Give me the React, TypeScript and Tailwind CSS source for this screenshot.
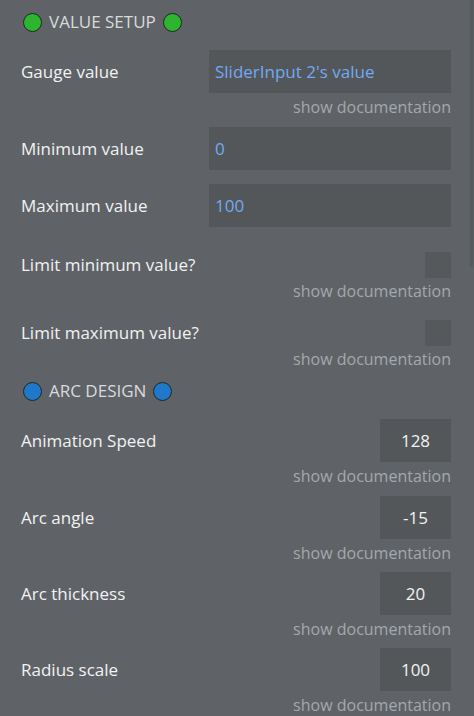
import { FC } from "react";

const DOC = "show documentation";

const SectionHeader: FC<{ title: string; dot: string; className?: string }> = ({ title, dot, className = "" }) => (
  <div className={`flex items-center gap-[7px] h-[28px] pl-[2px] ${className}`}>
    <span className={`h-[19px] w-[19px] rounded-full border-[1.5px] border-[#1c2a22] ${dot}`} />
    <span className="text-[17px] text-[#d9dadb]">{title}</span>
    <span className={`h-[19px] w-[19px] rounded-full border-[1.5px] border-[#1c2a22] ${dot}`} />
  </div>
);

const Doc: FC = () => (
  <div className="mt-[4px] h-[20px] leading-[20px] text-right text-[16px] text-[#a5a8ab]">{DOC}</div>
);

const TextRow: FC<{ label: string; value: string; doc?: boolean; className?: string }> = ({ label, value, doc, className = "" }) => (
  <div className={className}>
    <div className="flex items-center h-[43px]">
      <div className="flex-1 text-[17px] text-[#f2f2f2]">{label}</div>
      <div className="w-[242px] h-[43px] bg-[#53575a] flex items-center px-[6px] text-[17px] text-[#72a9f2]">{value}</div>
    </div>
    {doc && <Doc />}
  </div>
);

const NumberRow: FC<{ label: string; value: string; className?: string }> = ({ label, value, className = "" }) => (
  <div className={className}>
    <div className="flex items-center h-[43px]">
      <div className="flex-1 text-[17px] text-[#f2f2f2]">{label}</div>
      <div className="w-[71px] h-[43px] bg-[#53575a] flex items-center justify-center text-[17px] text-[#f2f2f2]">{value}</div>
    </div>
    <Doc />
  </div>
);

const CheckRow: FC<{ label: string; className?: string }> = ({ label, className = "" }) => (
  <div className={className}>
    <div className="flex items-center h-[26px]">
      <div className="flex-1 text-[17px] text-[#f2f2f2]">{label}</div>
      <div className="w-[26px] h-[26px] bg-[#55595c]" />
    </div>
    <div className="mt-[3px] h-[20px] leading-[20px] text-right text-[16px] text-[#a5a8ab]">{DOC}</div>
  </div>
);

export default function App() {
  return (
    <div
      className="relative h-[716px] w-full overflow-hidden bg-[#5f6367]"
      style={{ fontFamily: '"Open Sans", "Noto Sans", sans-serif' }}
    >
      <div className="flex flex-col pt-[8px] pl-[21px] pr-[23px]">
        {/* Value setup */}
        <SectionHeader title="VALUE SETUP" dot="bg-[#2eb52f]" />
        <TextRow className="mt-[14px]" label="Gauge value" value="SliderInput 2's value" doc />
        <TextRow className="mt-[10px]" label="Minimum value" value="0" />
        <TextRow className="mt-[14px]" label="Maximum value" value="100" />
        <CheckRow className="mt-[25px]" label="Limit minimum value?" />
        <CheckRow className="mt-[19px]" label="Limit maximum value?" />

        {/* Arc design */}
        <SectionHeader className="mt-[8px]" title="ARC DESIGN" dot="bg-[#1f78c9]" />
        <NumberRow className="mt-[14px]" label="Animation Speed" value="128" />
        <NumberRow className="mt-[10px]" label="Arc angle" value="-15" />
        <NumberRow className="mt-[9px]" label="Arc thickness" value="20" />
        <NumberRow className="mt-[9px]" label="Radius scale" value="100" />
      </div>

      {/* scrollbar thumb */}
      <div className="absolute right-[1px] top-0 h-[267px] w-[3px] bg-[#555a5e]" />
    </div>
  );
}
